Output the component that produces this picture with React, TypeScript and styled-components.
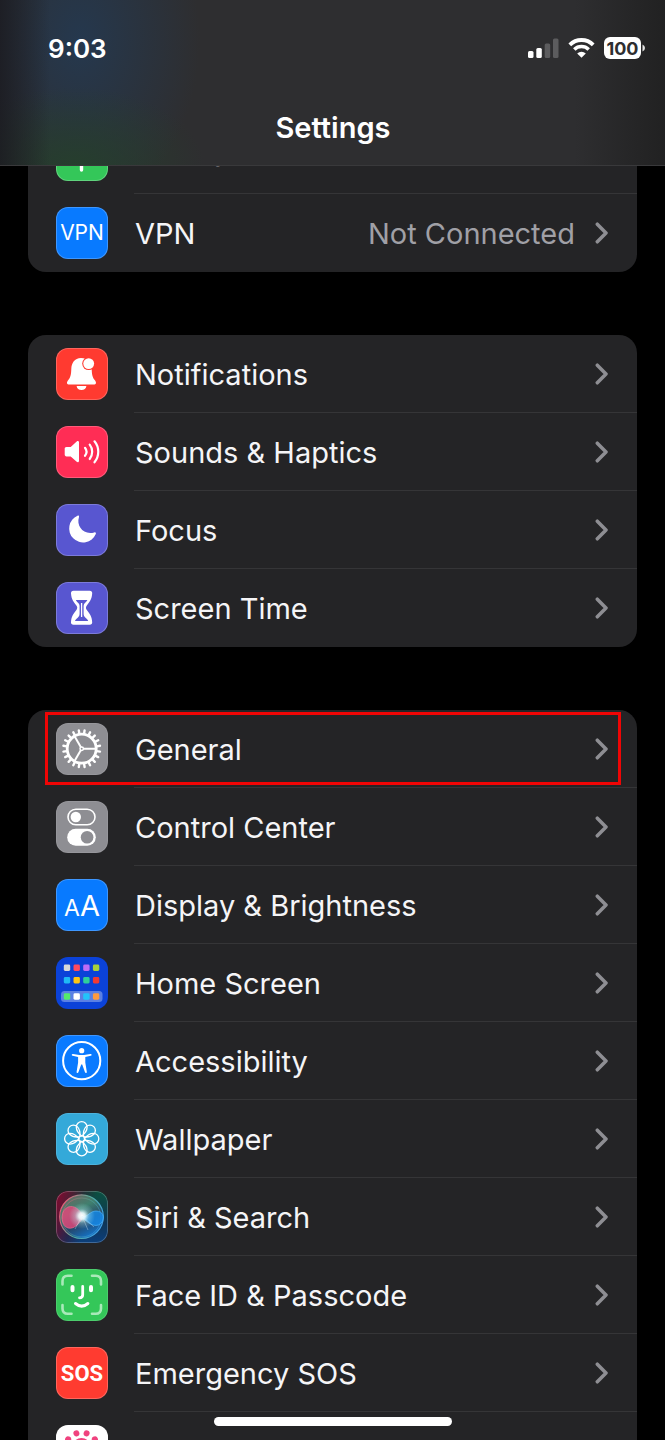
import React from "react";
import styled, { createGlobalStyle, css } from "styled-components";

const GlobalStyle = createGlobalStyle`
  * { box-sizing: border-box; }
  html, body { margin: 0; background: #000; }
  body {
    font-family: Inter, "Liberation Sans", sans-serif;
    color: #f5f5f7;
    overflow: hidden;
  }
`;

const Screen = styled.div`
  display: flex;
  flex-direction: column;
  height: 100vh;
  overflow: hidden;
  background: #000;
`;

const Header = styled.header`
  position: relative;
  z-index: 1;
  flex: none;
  height: 166px;
  padding: 30px 19px 0 48px;
  border-bottom: 1px solid #39393b;
  background:
    linear-gradient(to right, rgba(26, 26, 32, 0.8), rgba(24, 24, 30, 0) 50px),
    linear-gradient(to left, rgba(28, 28, 28, 0.7), rgba(28, 28, 28, 0) 90px),
    radial-gradient(ellipse 130px 80px at 75px 167px, rgba(37, 64, 44, 0.9), rgba(36, 60, 46, 0)),
    radial-gradient(ellipse 120px 170px at 80px 40px, #25384e, rgba(36, 55, 77, 0)),
    #2e2e30;
`;

const StatusBar = styled.div`
  display: flex;
  align-items: center;
  justify-content: space-between;
  height: 36px;
`;

const Time = styled.time`
  font-size: 26px;
  font-weight: 600;
  color: #fff;
`;

const StatusIcons = styled.div`
  display: flex;
  align-items: center;
  gap: 9px;
`;

const Title = styled.h1`
  margin: 44px 0 0 -28px;
  font-size: 29px;
  line-height: 36px;
  font-weight: 600;
  text-align: center;
  color: #fff;
`;

const Content = styled.main`
  flex: 1;
  min-height: 0;
`;

const GroupList = styled.div`
  display: flex;
  flex-direction: column;
  gap: 63px;
  margin: -50px 28px 0;
`;

const Group = styled.ul`
  margin: 0;
  padding: 0;
  list-style: none;
  border-radius: 18px;
  background: #242426;
`;

const RowBody = styled.span`
  display: flex;
  flex: 1;
  align-items: center;
  justify-content: flex-end;
  height: 100%;
  padding: 1px 28px 0 1px;
  border-bottom: 1px solid #353537;
`;

const Item = styled.li`
  &:last-child ${RowBody} { border-bottom-color: transparent; }
`;

const RowLink = styled.a<{ $marked?: boolean }>`
  position: relative;
  display: flex;
  align-items: center;
  gap: 26px;
  height: 78px;
  padding-left: 28px;
  color: inherit;
  text-decoration: none;
  ${(p) =>
    p.$marked &&
    css`
      &::after {
        content: "";
        position: absolute;
        inset: 2px 16px 3px 17px;
        border: 3px solid #f00505;
      }
    `}
`;

const Label = styled.span`
  flex: 1;
  padding-top: 2px;
  font-size: 29px;
  line-height: 36px;
  white-space: nowrap;
`;

const Value = styled.span`
  margin-right: 20px;
  padding-top: 2px;
  font-size: 29px;
  line-height: 36px;
  color: #a0a0a6;
`;

const Tile = styled.svg<{ $bg: string; $edge?: string }>`
  flex: none;
  width: 52px;
  height: 52px;
  border-radius: 12px;
  background: ${(p) => p.$bg};
  box-shadow: inset 0 0 0 1px ${(p) => p.$edge ?? "rgba(255, 255, 255, 0.22)"};
`;

const HomeIndicator = styled.div`
  position: fixed;
  z-index: 2;
  left: 50%;
  bottom: 14px;
  width: 238px;
  height: 9px;
  border-radius: 5px;
  background: #fff;
  transform: translateX(-50%);
`;

const Chevron = () => (
  <svg width="14" height="24" viewBox="0 0 14 24" fill="none" aria-hidden="true">
    <path d="M2.300 3.200 11 12l-8.700 8.800" stroke="#8e8e93" strokeWidth="3.500" strokeLinecap="round" strokeLinejoin="round" />
  </svg>
);

const Signal = () => (
  <svg width="31" height="20" viewBox="0 0 31 20" role="img" aria-label="Signal">
    <rect x="0" y="13" width="5.500" height="7" rx="1.500" fill="#fff" />
    <rect x="8.300" y="10" width="5.500" height="10" rx="1.500" fill="#fff" />
    <rect x="16.700" y="5.500" width="5.500" height="14.500" rx="1.500" fill="#5c5c5e" />
    <rect x="25" y="0.500" width="5.500" height="19.500" rx="1.500" fill="#5c5c5e" />
  </svg>
);

const Wifi = () => (
  <svg width="27" height="20" viewBox="0 0 27 20" fill="none" role="img" aria-label="Wi-Fi">
    <path d="M1.800 6.800a16.600 16.600 0 0 1 23.400 0" stroke="#fff" strokeWidth="3.900" />
    <path d="M6.300 11.400a10.200 10.200 0 0 1 14.400 0" stroke="#fff" strokeWidth="3.500" />
    <path d="M13.500 19.800 9.200 15.400a6.200 6.200 0 0 1 8.600 0Z" fill="#fff" />
  </svg>
);

const Battery = () => (
  <svg width="42" height="22" viewBox="0 0 42 22" role="img" aria-label="Battery 100">
    <rect width="37" height="22" rx="6" fill="#fff" />
    <path d="M38.500 7.500q2.500 1 2.500 3.500t-2.500 3.500Z" fill="#e4e4e4" />
    <text x="18.500" y="17.500" textAnchor="middle" fontSize="18" fontWeight="700" fill="#2e2e30">100</text>
  </svg>
);

const CellularIcon = () => (
  <Tile $bg="#34c759" viewBox="0 0 52 52">
    <path d="M25.500 22v19" stroke="#fff" strokeWidth="3.400" strokeLinecap="round" />
    <path d="M18 26a10 10 0 1 1 15 0" stroke="#fff" strokeWidth="3" fill="none" />
  </Tile>
);

const VpnIcon = () => (
  <Tile $bg="#087aff" viewBox="0 0 52 52">
    <text x="26" y="33" textAnchor="middle" fontSize="21" fill="#fff">VPN</text>
  </Tile>
);

const BellIcon = () => (
  <Tile $bg="#ff3a30" viewBox="0 0 52 52">
    <path d="M25 10c-6.500 0-9.500 5-9.700 11-.2 6-.8 8.500-3.200 11.300-1.500 1.800-1.500 4.200.4 4.200h26c1.900 0 1.900-2.400.4-4.200-2.400-2.800-3-5.300-3.200-11.300C35.500 15 32 10 25 10Z" fill="#fff" />
    <path d="M20.600 38h9.800c-.3 2.600-2.200 4-4.900 4s-4.600-1.400-4.900-4Z" fill="#fff" />
    <circle cx="32.700" cy="15.600" r="6.500" fill="#ff3a30" />
    <circle cx="32.700" cy="15.600" r="5.400" fill="#fff" />
  </Tile>
);

const SoundIcon = () => (
  <Tile $bg="#ff2d55" viewBox="0 0 52 52" fill="none" stroke="#fff" strokeLinecap="round">
    <path d="M10.500 21h4.200l6-5.400c1-.9 2.300-.5 2.300 1v18.200c0 1.500-1.300 1.900-2.300 1l-6-5.400h-4.200c-1.200 0-1.800-.7-1.800-1.800v-5.800c0-1.100.6-1.800 1.800-1.800Z" fill="#fff" stroke="none" />
    <path d="M29 21.800c1.800 2.300 1.800 5.700 0 8M33.700 18.600c3.300 4 3.300 10.200 0 14.400M38.500 15.300c5 6 5 15 0 21" strokeWidth="2.200" />
  </Tile>
);

const MoonIcon = () => (
  <Tile $bg="#5856d0" viewBox="0 0 52 52">
    <path d="M21.500 11.800c1-.5 1.900.1 1.500 1.300-3 9 4.500 18.300 15.200 15.300 1.400-.4 2.100.4 1.600 1.700A13.900 13.900 0 1 1 21.500 11.800Z" fill="#fff" />
  </Tile>
);

const HourglassIcon = () => (
  <Tile $bg="#5856d0" viewBox="0 0 52 52">
    <path d="M17.500 8.700h16.200c1.700 0 2.600 1 2.500 2.600-.3 6-2.600 8.700-5.200 12-1.400 1.700-1.400 3.300 0 5 2.600 3.300 4.900 6 5.200 12 .1 1.600-.8 2.500-2.500 2.500H17.500c-1.700 0-2.600-.9-2.500-2.500.3-6 2.600-8.700 5.200-12 1.400-1.700 1.400-3.300 0-5-2.600-3.300-4.900-6-5.200-12-.1-1.600.8-2.600 2.500-2.600Z" fill="#fff" />
    <path d="M19.800 18h11.600c-.7 1.400-2 2.400-3.100 3.700-.6.800-.7 1.600-.7 2.600v7.200c0 2 .6 3.100 1.900 4.200 1.200 1 2.200 1.900 2.700 3.200H19c.5-1.300 1.500-2.200 2.700-3.200 1.300-1.100 1.900-2.200 1.900-4.200v-7.200c0-1-.1-1.800-.7-2.600-1.100-1.300-2.400-2.300-3.100-3.700Z" fill="#5856d0" />
    <path d="M25.600 21v14" stroke="#fff" strokeWidth="1.300" />
  </Tile>
);

const teeth = Array.from({ length: 20 }, (_, i) => i * 18);

const GearIcon = () => (
  <Tile $bg="#8e8e93" $edge="rgba(255, 255, 255, 0.08)" viewBox="0 0 52 52" fill="none" stroke="#fff">
    <circle cx="25.700" cy="25.700" r="14.500" strokeWidth="2.800" />
    {teeth.map((a) => (
      <path key={a} d="M25.700 10.500V7.200" strokeWidth="2.400" strokeLinecap="round" transform={`rotate(${a + 9} 25.7 25.7)`} />
    ))}
    {[0, 120, 240].map((a) => (
      <path key={a} d="M27 25.700h13" strokeWidth="2" transform={`rotate(${a} 25.7 25.7)`} />
    ))}
    <circle cx="25.700" cy="25.700" r="1.700" strokeWidth="1.500" />
  </Tile>
);

const ControlIcon = () => (
  <Tile $bg="#8e8e93" $edge="rgba(255, 255, 255, 0.08)" viewBox="0 0 52 52">
    <rect x="12" y="8.200" width="27" height="15.600" rx="7.800" fill="none" stroke="#fff" strokeWidth="1.600" />
    <circle cx="19.800" cy="16" r="5.200" fill="#fff" />
    <rect x="11.200" y="27.700" width="28.600" height="17" rx="8.500" fill="#fff" />
    <circle cx="31.100" cy="36.200" r="6.300" fill="#8e8e93" />
  </Tile>
);

const TextSizeIcon = () => (
  <Tile $bg="#087aff" viewBox="0 0 52 52" fill="#fff">
    <text x="8" y="36.500" fontSize="23">A</text>
    <text x="24" y="36.500" fontSize="29">A</text>
  </Tile>
);

const appColors = [
  ["#d8d8d8", "#ff4a5e", "#bf6cf5", "#a8d03c"],
  ["#1fb9f5", "#ffc514", "#2fd09a", "#f23a34"],
  ["#54ea6c", "#ffffff", "#22c3fa", "#ff9b3e"],
];

const HomeScreenIcon = () => (
  <Tile $bg="#0b42d8" $edge="transparent" viewBox="0 0 52 52">
    <rect x="5" y="34" width="41.500" height="11" rx="3.500" fill="#5a80e4" />
    {appColors.map((row, r) =>
      row.map((color, c) => (
        <rect key={`${r}-${c}`} x={7.8 + c * 9.7} y={[7.6, 20, 36.3][r]} width="6.400" height="6.400" rx="1.400" fill={color} />
      ))
    )}
  </Tile>
);

const AccessibilityIcon = () => (
  <Tile $bg="#0a7aff" viewBox="0 0 52 52">
    <circle cx="25.700" cy="25.700" r="18.600" fill="none" stroke="#fff" strokeWidth="2" />
    <circle cx="25.700" cy="15.700" r="2.600" fill="#fff" />
    <path d="M17 18.900 23.300 20h4.800l6.300-1.100c1.500-.2 1.700 1.600.3 1.900l-5.400 1.300v5.400l1.500 9.200c.2 1.400-1.400 1.700-1.900.4l-2.700-7.600h-1l-2.700 7.600c-.5 1.300-2.100 1-1.900-.4l1.500-9.200v-5.400l-5.400-1.300c-1.400-.3-1.200-2.100.3-1.900Z" fill="#fff" />
  </Tile>
);

const FlowerIcon = () => (
  <Tile $bg="#34a9d9" $edge="rgba(255, 255, 255, 0.12)" viewBox="0 0 52 52" fill="none" stroke="#fff" strokeWidth="1.300">
    {[0, 45, 90, 135, 180, 225, 270, 315].map((a) => (
      <path key={a} d="M25.700 23c-2.800-2.100-5.400-5-5.400-9a5.400 5.400 0 0 1 10.800 0c0 4-2.600 6.900-5.400 9Z" transform={`rotate(${a} 25.7 25.7)`} />
    ))}
    <circle cx="25.700" cy="25.700" r="2.900" strokeWidth="1.200" />
  </Tile>
);

const SiriIcon = () => (
  <Tile
    $bg="linear-gradient(110deg, rgba(120, 12, 48, 0.95) 10%, rgba(60, 18, 44, 0.5) 40%, transparent 60%), linear-gradient(to bottom, #0b5140, #103656 60%, #0b3f7c)"
    viewBox="0 0 52 52"
  >
    <defs>
      <linearGradient id="orb" x1="0.200" y1="0" x2="0.700" y2="1">
        <stop offset="0" stopColor="#6b6660" />
        <stop offset="0.350" stopColor="#40806f" />
        <stop offset="0.650" stopColor="#24476a" />
        <stop offset="1" stopColor="#1279d4" />
      </linearGradient>
      <linearGradient id="ring" x1="0" y1="0.300" x2="1" y2="0.700">
        <stop offset="0" stopColor="#eb5874" />
        <stop offset="0.500" stopColor="#55ad99" />
        <stop offset="1" stopColor="#3f9eed" />
      </linearGradient>
      <radialGradient id="flare">
        <stop offset="0" stopColor="#fff" />
        <stop offset="0.250" stopColor="#f0ffff" stopOpacity="0.900" />
        <stop offset="0.550" stopColor="#b8eef0" stopOpacity="0.350" />
        <stop offset="1" stopColor="#a8eff5" stopOpacity="0" />
      </radialGradient>
    </defs>
    <circle cx="25.500" cy="25.700" r="21.800" fill="url(#orb)" stroke="url(#ring)" strokeWidth="1.200" />
    <circle cx="25.500" cy="26.500" r="19.500" fill="none" stroke="url(#ring)" strokeOpacity="0.500" />
    <path d="M27 26c-3-8-9-12-15-10-7 3-8 15-2 20 6 4 13-2 17-10Z" fill="#e8457a" fillOpacity="0.800" stroke="#f27294" strokeWidth="0.600" />
    <path d="M26 26c6 0 8-6 14-6 7 0 9 6 6 11-4 6-12 4-20-5Z" fill="#158beb" fillOpacity="0.800" stroke="#4bb5ff" strokeWidth="0.700" />
    <circle cx="26" cy="25" r="13" fill="url(#flare)" />
    <path d="M26 25 38 36M26 25l6 14M26 25l-7 13" stroke="#dff3ff" strokeOpacity="0.350" />
  </Tile>
);

const FaceIcon = () => (
  <Tile $bg="#34c759" $edge="rgba(255, 255, 255, 0.12)" viewBox="0 0 52 52" fill="none" stroke="#fff" strokeLinecap="round">
    <path d="M6.500 15.500V12q0-5.300 5.300-5.300h3.700M36 6.700h3.700Q45 6.700 45 12v3.500M45 36v3.500q0 5.300-5.300 5.300H36M15.500 44.800h-3.700q-5.300 0-5.300-5.300V36" stroke="#a9e9b9" strokeWidth="2.600" />
    <path d="M16.500 18v3.300M35 18v3.300" strokeWidth="4" />
    <path d="M26.700 17.500v8.300q0 3-3.200 3" strokeWidth="2.800" />
    <path d="M19.500 34.500q6.200 5.200 12.400 0" strokeWidth="3" />
  </Tile>
);

const SosIcon = () => (
  <Tile $bg="#ff3b30" viewBox="0 0 52 52">
    <text x="26" y="34" textAnchor="middle" fontSize="22" fontWeight="700" fontFamily="Roboto, sans-serif" fill="#fff">SOS</text>
  </Tile>
);

const ExposureIcon = () => (
  <Tile $bg="#fff" viewBox="0 0 52 52" fill="#f0437f">
    {teeth.filter((_, i) => i % 2 === 0).map((a) => (
      <circle key={a} cx="25.500" cy="7.500" r="3" transform={`rotate(${a + 18} 25.5 24)`} />
    ))}
    <circle cx="25.500" cy="22.500" r="8" fill="none" stroke="#f0437f" strokeWidth="3" />
  </Tile>
);

type Entry = { name: string; icon: React.FC; value?: string; marked?: boolean; iconOnly?: boolean };

const groups: Entry[][] = [
  [
    { name: "Cellular", icon: CellularIcon },
    { name: "VPN", icon: VpnIcon, value: "Not Connected" },
  ],
  [
    { name: "Notifications", icon: BellIcon },
    { name: "Sounds & Haptics", icon: SoundIcon },
    { name: "Focus", icon: MoonIcon },
    { name: "Screen Time", icon: HourglassIcon },
  ],
  [
    { name: "General", icon: GearIcon, marked: true },
    { name: "Control Center", icon: ControlIcon },
    { name: "Display & Brightness", icon: TextSizeIcon },
    { name: "Home Screen", icon: HomeScreenIcon },
    { name: "Accessibility", icon: AccessibilityIcon },
    { name: "Wallpaper", icon: FlowerIcon },
    { name: "Siri & Search", icon: SiriIcon },
    { name: "Face ID & Passcode", icon: FaceIcon },
    { name: "Emergency SOS", icon: SosIcon },
    { name: "Exposure", icon: ExposureIcon, iconOnly: true },
  ],
];

const SettingsRow = ({ name, icon: Icon, value, marked, iconOnly }: Entry) => (
  <Item>
    <RowLink href="#" $marked={marked} aria-label={iconOnly ? name : undefined}>
      <Icon />
      <RowBody>
        {!iconOnly && <Label>{name}</Label>}
        {value && <Value>{value}</Value>}
        {!iconOnly && <Chevron />}
      </RowBody>
    </RowLink>
  </Item>
);

export default function App() {
  return (
    <Screen>
      <GlobalStyle />
      <Header>
        <StatusBar>
          <Time>9:03</Time>
          <StatusIcons>
            <Signal />
            <Wifi />
            <Battery />
          </StatusIcons>
        </StatusBar>
        <Title>Settings</Title>
      </Header>
      <Content>
        <GroupList>
          {groups.map((entries) => (
            <Group key={entries[0].name}>
              {entries.map((entry) => (
                <SettingsRow key={entry.name} {...entry} />
              ))}
            </Group>
          ))}
        </GroupList>
      </Content>
      <HomeIndicator />
    </Screen>
  );
}
